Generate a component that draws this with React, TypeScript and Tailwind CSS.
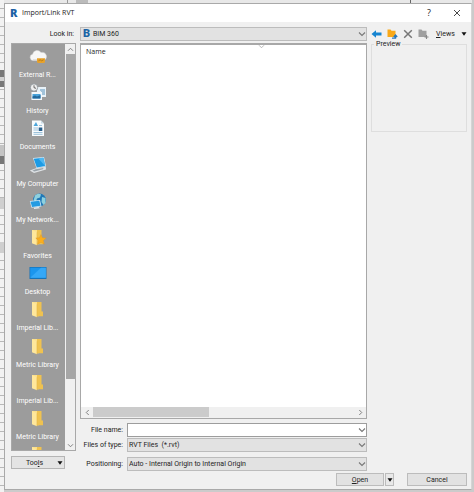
import { useState } from 'react';
import type { ReactNode } from 'react';

const CHEVRON = <path d="M1 1.5 4 4.5 7 1.5" fill="none" stroke="#777" strokeWidth="1.1" />;

function CloudIcon() {
  return (
    <svg viewBox="0 0 18 18" className="h-[18px] w-[18px]">
      <path d="M4 13.5a3.2 3.2 0 0 1-.4-6.3A4.6 4.6 0 0 1 12 5.6a3.7 3.7 0 0 1 2.6 7.900z" fill="#f7f7f7" stroke="#d8d8d8" strokeWidth=".5" />
      <path d="M4 12.8h8" stroke="#cfcfcf" strokeWidth=".8" />
      <path d="M8 11.2h8v3.2a1.5 1.5 0 0 1-1.5 1.5h-5A1.5 1.5 0 0 1 8 14.400z" fill="#e8a22b" />
      <path d="M9.500 13.8l1.600-1 1.500 1 2-1" fill="none" stroke="#a5700e" strokeWidth=".7" />
    </svg>
  );
}

function HistoryIcon() {
  return (
    <svg viewBox="0 0 18 18" className="h-[18px] w-[18px]">
      <path d="M8 4h9v10H8z" fill="#e9f2f8" />
      <path d="M11 7h5M12 9h4M12 11h4" stroke="#5b94bd" strokeWidth="1" />
      <path d="M2.500 9H13v8H2.500z" fill="#f4f8fb" />
      <path d="M3.500 11h8v4.500h-8z" fill="#4aa3da" />
      <path d="M3.500 13.500l2.500-1 2 1 3.500-1.500v3.500h-8z" fill="#23699c" />
      <circle cx="5" cy="4.500" r="3.700" fill="#eee" stroke="#858e94" strokeWidth=".8" />
      <path d="M5 2.300v2.400l2 .6" fill="none" stroke="#444" strokeWidth=".8" />
    </svg>
  );
}

function DocumentIcon() {
  return (
    <svg viewBox="0 0 18 18" className="h-[18px] w-[18px]">
      <path d="M3 1.500h9l3 3V17H3z" fill="#f8fbfd" />
      <path d="M12 1.500v3h3" fill="#cbdde8" />
      <path d="M4.500 7l2.500-4 2 4z" fill="#4ba6dc" />
      <path d="M10 6.500h3M4.500 9H9M4.500 11H9M4.500 13.500h9M4.500 15.300h9" stroke="#84b4d2" strokeWidth=".8" />
      <path d="M9.700 8.500h3.600V12H9.700z" fill="#285f8c" />
    </svg>
  );
}

function ComputerIcon() {
  return (
    <svg viewBox="0 0 18 18" className="h-[18px] w-[18px]">
      <path d="M4 2 15 1l2 9.500-9.500 1.700z" fill="#d9ecf8" />
      <path d="M4.700 2.700 14.400 1.800 16.200 9.900l-8.400 1.500z" fill="#1d9be5" />
      <path d="M9 2.300 14.400 1.800 16.200 9.900z" fill="#50b8f1" />
      <path d="M7 12.200 16.800 10.700 17 13.500 5 17 .8 14.500z" fill="#dfe3e6" />
      <path d="M6.500 13.200l8-1.200-.6 1.300-8.500 2.200-2-.7z" fill="#98a2a9" />
    </svg>
  );
}

function NetworkIcon() {
  return (
    <svg viewBox="0 0 18 18" className="h-[18px] w-[18px]">
      <circle cx="10.500" cy="8" r="6.500" fill="#1f78b8" />
      <path d="M6 3.500c2-2 5-2 6-1l-1 3-3 1-1 3-2.500-1zM13 5l3.500 1v5l-2 2-2-3z" fill="#8ed0de" />
      <path d="M.8 9 11 8l1.500 6.500-10 1.200z" fill="#d3eaf7" />
      <path d="M1.500 9.700 10.300 8.800l1.300 5-8.500 1.100z" fill="#249be2" />
      <path d="M5 15.500l4.500-.6 1.500 1.300-6 .9z" fill="#e6eaed" />
    </svg>
  );
}

function FolderShape() {
  return (
    <>
      <path d="M3 2h6.500v14.500L3 15z" fill="#fbe08b" />
      <path d="M8 2h4.500v9.500H14v4.800H8z" fill="#efc250" />
      <path d="M3 2l5 2.200v13L3 15.200z" fill="#ffe79b" />
      <path d="M8 4.200v13" stroke="#e3b543" strokeWidth=".6" />
    </>
  );
}

function FolderIcon() {
  return (
    <svg viewBox="0 0 18 18" className="h-[18px] w-[18px]">
      <FolderShape />
    </svg>
  );
}

function FavoritesIcon() {
  return (
    <svg viewBox="0 0 18 18" className="h-[18px] w-[18px]">
      <FolderShape />
      <path d="M12 6.500l1.500 3.300 3.700.3-2.800 2.400.9 3.700-3.300-1.900-3.300 1.900.9-3.700-2.800-2.400 3.700-.3z" fill="#fbae1c" stroke="#d9952b" strokeWidth=".4" />
    </svg>
  );
}

function DesktopIcon() {
  return (
    <svg viewBox="0 0 18 18" className="h-[18px] w-[18px]">
      <path d="M.5 3h17v12H.5z" fill="#1673b8" />
      <path d="M1.200 3.700h15.600v10H1.200z" fill="#1b96ee" />
      <path d="M1.200 13.700 12 3.700h4.800v10z" fill="#35a8f7" />
    </svg>
  );
}

const PLACES: { label: string; icon: ReactNode }[] = [
  { label: 'External R...', icon: <CloudIcon /> },
  { label: 'History', icon: <HistoryIcon /> },
  { label: 'Documents', icon: <DocumentIcon /> },
  { label: 'My Computer', icon: <ComputerIcon /> },
  { label: 'My Network...', icon: <NetworkIcon /> },
  { label: 'Favorites', icon: <FavoritesIcon /> },
  { label: 'Desktop', icon: <DesktopIcon /> },
  { label: 'Imperial Lib...', icon: <FolderIcon /> },
  { label: 'Metric Library', icon: <FolderIcon /> },
  { label: 'Imperial Lib...', icon: <FolderIcon /> },
  { label: 'Metric Library', icon: <FolderIcon /> },
];

function Chevron() {
  return (
    <svg viewBox="0 0 8 6" className="pointer-events-none absolute top-1 right-px h-[6px] w-[8px]">
      {CHEVRON}
    </svg>
  );
}

function Caret() {
  return (
    <svg viewBox="0 0 6 4" className="h-1 w-1.5 shrink-0">
      <path d="M.5.3h5L3 3.700z" fill="#111" />
    </svg>
  );
}

function SelectRow({ id, label, value }: { id: string; label: string; value: string }) {
  return (
    <div className="flex items-center">
      <label htmlFor={id} className="w-[47px] shrink-0 pr-1 text-right">{label}</label>
      <div className="relative flex-1">
        <select id={id} className="block h-3.5 w-full appearance-none border border-[#bcbcbc] bg-[#e2e2e2] px-px leading-3 outline-none">
          <option>{value}</option>
        </select>
        <Chevron />
      </div>
    </div>
  );
}

// Edge of the spreadsheet that shows left of the dialog
function SheetEdge() {
  return (
    <div className="flex w-1 shrink-0 flex-col bg-[repeating-linear-gradient(#f2f2f2_0_8px,#b8b8b8_8px_9px)]">
      <div className="h-[70px]" />
      <div className="h-[7px] bg-[#777]" />
      <div className="h-1 bg-[#d0d0d0]" />
      <div className="h-[6px] bg-[#777]" />
      <div className="h-[58px]" />
      <div className="h-[11px] bg-[#c4c4c4]" />
      <div className="h-[8px] bg-[#777]" />
      <div className="h-[34px]" />
      <div className="h-[11px] bg-[#cfcfcf]" />
      <div className="h-[33px]" />
      <div className="h-[11px] bg-[#cfcfcf]" />
    </div>
  );
}

export default function App() {
  const [fileName, setFileName] = useState('');

  return (
    <div className="flex h-screen min-h-80 font-['Roboto','Liberation_Sans',sans-serif] text-[7px] leading-[10px] text-[#222]">
      <SheetEdge />
      <div className="flex min-w-0 flex-1 flex-col bg-[#cbcbcb] pr-0.5 pb-0.5">
        <div className="flex h-[3px] shrink-0 bg-[#e8e8e8]">
          <div className="w-16 border-r border-[#999]" />
          <div className="ml-2 w-3 bg-[#bbb]" />
          <div className="flex-1" />
          <div className="w-[62px] border-l border-[#666]" />
        </div>
        <div className="flex min-h-0 flex-1 flex-col border border-[#a9a9a9] border-r-[#d5d5d5] bg-[#f0f0f0]">
          <header className="flex h-[18px] shrink-0 items-center bg-white pr-2 pl-[5px] font-['Open_Sans',sans-serif]">
            <span className="w-3 text-[11px] font-extrabold text-[#1b62a5]">R</span>
            <h1 className="flex-1">Import/Link RVT</h1>
            <button aria-label="Help" className="w-3 text-[9px]">?</button>
            <button aria-label="Close" className="ml-4 flex h-3 w-3 items-center justify-center">
              <svg viewBox="0 0 8 8" className="h-2 w-2"><path d="M1 1l6 6M7 1 1 7" stroke="#333" strokeWidth=".9" /></svg>
            </button>
          </header>

          <div className="flex min-h-0 flex-1 flex-col pt-[5px] pr-1 pb-[3px] pl-1.5">
            {/* Look in */}
            <div className="flex shrink-0 items-center">
              <label htmlFor="look-in" className="w-[69px] shrink-0 pr-1.5 text-right">Look in:</label>
              <div className="relative flex-1">
                <span className="pointer-events-none absolute top-0.5 left-[3px] text-[11px] font-black text-[#1c64a5]">B</span>
                <select id="look-in" className="block h-3.5 w-full appearance-none border border-[#bcbcbc] bg-[#e2e2e2] pr-2 pl-3 leading-3 outline-none">
                  <option>BIM 360</option>
                </select>
                <Chevron />
              </div>
              <div className="flex w-[100px] shrink-0 items-center gap-[5px] pl-1">
                <button aria-label="Back">
                  <svg viewBox="0 0 11 10" className="h-2.5 w-[11px]"><path d="M.5 5 5 1.200v2.300h5.500v3H5v2.300z" fill="#1684d0" /></svg>
                </button>
                <button aria-label="Up one level">
                  <svg viewBox="0 0 11 10" className="h-2.5 w-[11px]">
                    <path d="M.5.5h3l1 1.200h4V8h-8z" fill="#f8a818" />
                    <path d="M5 9.200h3.500V7M6.800 8l1.700-2 1.700 2" fill="none" stroke="#2876ba" strokeWidth="1.300" />
                  </svg>
                </button>
                <button aria-label="Delete">
                  <svg viewBox="0 0 10 10" className="h-2.5 w-2.5"><path d="M1.200 1.200l7.600 7.600M8.800 1.200 1.200 8.800" stroke="#777" strokeWidth="1.500" /></svg>
                </button>
                <button aria-label="New folder">
                  <svg viewBox="0 0 11 10" className="h-2.5 w-[11px]">
                    <path d="M.5.5h3l1 1.200h4V8h-8z" fill="#a0a0a0" />
                    <path d="M8.500 6v4M6.500 8h4" stroke="#888" strokeWidth="1.100" />
                  </svg>
                </button>
                <button className="flex items-center gap-1.5 pl-0.5">
                  <span><span className="underline">V</span>iews</span>
                  <Caret />
                </button>
              </div>
            </div>

            <div className="flex min-h-0 flex-1 gap-1 pt-0.5">
              {/* Places */}
              <div className="flex w-[65px] shrink-0 flex-col">
                <nav className="flex min-h-0 flex-1 border border-[#a8a8a8] bg-[#f0f0f0]">
                  <div className="flex min-w-0 flex-1 flex-col overflow-hidden bg-[#9c9c9c] pt-[3px]">
                    <ul className="flex min-h-0 flex-1 flex-col">
                      {PLACES.map((place, i) => (
                        <li key={i} className="min-h-0 flex-1">
                          <button className="flex w-full flex-col items-center gap-[5px] pr-0.5 whitespace-nowrap text-white">
                            {place.icon}
                            <span>{place.label}</span>
                          </button>
                        </li>
                      ))}
                    </ul>
                    <div className="flex h-[5px] shrink-0 justify-center overflow-hidden pr-0.5"><FolderIcon /></div>
                  </div>
                  <div className="flex w-2.5 shrink-0 flex-col pl-px">
                    <button aria-label="Scroll up" className="flex h-2.5 items-center justify-center">
                      <svg viewBox="0 0 8 6" className="h-[5px] w-[7px] rotate-180">{CHEVRON}</svg>
                    </button>
                    <div className="flex-[326] bg-[#a6a6a6]" />
                    <div className="flex-[61]" />
                    <button aria-label="Scroll down" className="flex h-2.5 items-center justify-center">
                      <svg viewBox="0 0 8 6" className="h-[5px] w-[7px]">{CHEVRON}</svg>
                    </button>
                  </div>
                </nav>
                <button className="mt-[5px] flex h-[13px] w-[54px] shrink-0 items-center border border-[#b5b5b5] bg-[#e4e4e4] pr-px">
                  <span className="flex-1">Too<span className="underline">l</span>s</span>
                  <Caret />
                </button>
                <div className="h-0.5 shrink-0" />
              </div>

              {/* File list and fields */}
              <div className="flex min-w-0 flex-1 flex-col">
                <div className="relative flex min-h-0 flex-1 flex-col border border-t-2 border-[#a8a8a8] bg-white">
                  <svg viewBox="0 0 8 6" className="absolute -top-px left-[62%] h-[5px] w-[7px]">
                    <path d="M1 1.500 4 4.500 7 1.500" fill="#fff" stroke="#aaa" strokeWidth="1" />
                  </svg>
                  <div className="flex-1 px-[5px] pt-0.5 font-['Open_Sans',sans-serif]">Name</div>
                  <div className="flex h-2.5 shrink-0 bg-[#f0f0f0]">
                    <button aria-label="Scroll left" className="flex w-3 items-center justify-center">
                      <svg viewBox="0 0 8 6" className="h-[5px] w-[7px] rotate-90">{CHEVRON}</svg>
                    </button>
                    <div className="flex-[116] bg-[#cbcbcb]" />
                    <div className="flex-[145]" />
                    <button aria-label="Scroll right" className="flex w-3 items-center justify-center">
                      <svg viewBox="0 0 8 6" className="h-[5px] w-[7px] -rotate-90">{CHEVRON}</svg>
                    </button>
                  </div>
                  <div className="h-px shrink-0 bg-[#f0f0f0]" />
                </div>
                <div className="mt-1 flex shrink-0 items-center">
                  <label htmlFor="file-name" className="w-[47px] shrink-0 pr-1 text-right">File name:</label>
                  <div className="relative flex-1">
                    <input id="file-name" value={fileName} onChange={(e) => setFileName(e.target.value)} className="block h-3.5 w-full border border-[#9d9d9d] bg-white pr-2.5 pl-px outline-none" />
                    <Chevron />
                  </div>
                </div>
                <div className="mt-px shrink-0">
                  <SelectRow id="file-type" label="Files of type:" value={'RVT Files\u00a0 (*.rvt)'} />
                </div>
                <div className="mt-[5px] shrink-0">
                  <SelectRow id="positioning" label="Positioning:" value="Auto - Internal Origin to Internal Origin" />
                </div>
              </div>

              {/* Preview */}
              <div className="w-24 shrink-0">
                <fieldset className="h-[89px] border border-[#dedede] pl-0.5">
                  <legend className="px-0.5 leading-[2px]">Preview</legend>
                </fieldset>
              </div>
            </div>

            <footer className="mt-0.5 flex shrink-0 justify-end">
              <button className="h-[13px] w-12 border border-[#bcbcbc] bg-[#e2e2e2]"><span className="underline">O</span>pen</button>
              <button aria-label="Open options" className="ml-px flex h-[13px] w-[9px] items-center justify-center border border-[#bcbcbc] bg-[#e8e8e8]"><Caret /></button>
              <button className="ml-[13px] h-[13px] w-[60px] border border-[#bcbcbc] bg-[#e2e2e2]">Cancel</button>
            </footer>
          </div>
        </div>
      </div>
    </div>
  );
}
